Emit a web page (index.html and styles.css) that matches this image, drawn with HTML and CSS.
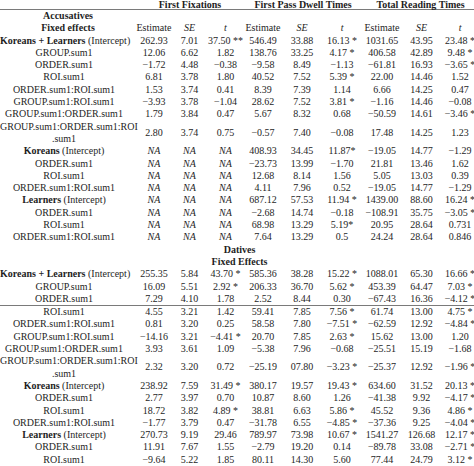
FILE: index.html
```html
<!DOCTYPE html>
<html>
<head>
<meta charset="utf-8">
<link rel="stylesheet" href="styles.css">
</head>
<body>
<table class="tbl">
<colgroup>
<col class="c-lab"><col class="c-e1"><col class="c-s1"><col class="c-t1"><col class="c-e2"><col class="c-s2"><col class="c-t2"><col class="c-e3"><col class="c-s3"><col class="c-t3">
</colgroup>
<tbody>
<tr class="head"><td></td><td colspan="3">First Fixations</td><td colspan="3">First Pass Dwell Times</td><td colspan="3">Total Reading Times</td></tr>
<tr><td class="sec">Accusatives</td><td></td><td></td><td></td><td></td><td></td><td></td><td></td><td></td><td></td></tr>
<tr><td class="sec">Fixed effects</td><td>Estimate</td><td class="i">SE</td><td class="i">t</td><td>Estimate</td><td class="i">SE</td><td class="i">t</td><td>Estimate</td><td class="i">SE</td><td class="i">t</td></tr>
<tr><td class="lab"><b>Koreans + Learners</b> (Intercept)</td><td>262.93</td><td>7.01</td><td>37.50 **</td><td>546.49</td><td>33.88</td><td>16.13 *</td><td>1031.65</td><td>43.95</td><td>23.48 *</td></tr>
<tr><td class="lab">GROUP.sum1</td><td>12.06</td><td>6.62</td><td>1.82</td><td>138.76</td><td>33.25</td><td>4.17 *</td><td>406.58</td><td>42.89</td><td>9.48 *</td></tr>
<tr><td class="lab">ORDER.sum1</td><td>−1.72</td><td>4.48</td><td>−0.38</td><td>−9.58</td><td>8.49</td><td>−1.13</td><td>−61.81</td><td>16.93</td><td>−3.65 *</td></tr>
<tr><td class="lab">ROI.sum1</td><td>6.81</td><td>3.78</td><td>1.80</td><td>40.52</td><td>7.52</td><td>5.39 *</td><td>22.00</td><td>14.46</td><td>1.52</td></tr>
<tr><td class="lab">ORDER.sum1:ROI.sum1</td><td>1.53</td><td>3.74</td><td>0.41</td><td>8.39</td><td>7.39</td><td>1.14</td><td>6.66</td><td>14.25</td><td>0.47</td></tr>
<tr><td class="lab">GROUP.sum1:ROI.sum1</td><td>−3.93</td><td>3.78</td><td>−1.04</td><td>28.62</td><td>7.52</td><td>3.81 *</td><td>−1.16</td><td>14.46</td><td>−0.08</td></tr>
<tr><td class="lab">GROUP.sum1:ORDER.sum1</td><td>1.79</td><td>3.84</td><td>0.47</td><td>5.67</td><td>8.32</td><td>0.68</td><td>−50.59</td><td>14.61</td><td>−3.46 *</td></tr>
<tr><td class="lab">GROUP.sum1:ORDER.sum1:ROI<br>.sum1</td><td>2.80</td><td>3.74</td><td>0.75</td><td>−0.57</td><td>7.40</td><td>−0.08</td><td>17.48</td><td>14.25</td><td>1.23</td></tr>
<tr><td class="lab"><b>Koreans</b> (Intercept)</td><td class="i">NA</td><td class="i">NA</td><td class="i">NA</td><td>408.93</td><td>34.45</td><td>11.87*</td><td>−19.05</td><td>14.77</td><td>−1.29</td></tr>
<tr><td class="lab">ORDER.sum1</td><td class="i">NA</td><td class="i">NA</td><td class="i">NA</td><td>−23.73</td><td>13.99</td><td>−1.70</td><td>21.81</td><td>13.46</td><td>1.62</td></tr>
<tr><td class="lab">ROI.sum1</td><td class="i">NA</td><td class="i">NA</td><td class="i">NA</td><td>12.68</td><td>8.14</td><td>1.56</td><td>5.05</td><td>13.03</td><td>0.39</td></tr>
<tr><td class="lab">ORDER.sum1:ROI.sum1</td><td class="i">NA</td><td class="i">NA</td><td class="i">NA</td><td>4.11</td><td>7.96</td><td>0.52</td><td>−19.05</td><td>14.77</td><td>−1.29</td></tr>
<tr><td class="lab"><b>Learners</b> (Intercept)</td><td class="i">NA</td><td class="i">NA</td><td class="i">NA</td><td>687.12</td><td>57.53</td><td>11.94 *</td><td>1439.00</td><td>88.60</td><td>16.24 *</td></tr>
<tr><td class="lab">ORDER.sum1</td><td class="i">NA</td><td class="i">NA</td><td class="i">NA</td><td>−2.68</td><td>14.74</td><td>−0.18</td><td>−108.91</td><td>35.75</td><td>−3.05 *</td></tr>
<tr><td class="lab">ROI.sum1</td><td class="i">NA</td><td class="i">NA</td><td class="i">NA</td><td>68.98</td><td>13.29</td><td>5.19*</td><td>20.95</td><td>28.64</td><td>0.731</td></tr>
<tr><td class="lab">ORDER.sum1:ROI.sum1</td><td class="i">NA</td><td class="i">NA</td><td class="i">NA</td><td>7.64</td><td>13.29</td><td>0.5</td><td>24.24</td><td>28.64</td><td>0.846</td></tr>
<tr><td colspan="10" class="mid">Datives</td></tr>
<tr><td colspan="10" class="mid">Fixed Effects</td></tr>
<tr><td class="lab"><b>Koreans + Learners</b> (Intercept)</td><td>255.35</td><td>5.84</td><td>43.70 *</td><td>585.36</td><td>38.28</td><td>15.22 *</td><td>1088.01</td><td>65.30</td><td>16.66 *</td></tr>
<tr><td class="lab">GROUP.sum1</td><td>16.09</td><td>5.51</td><td>2.92 *</td><td>206.33</td><td>36.70</td><td>5.62 *</td><td>453.39</td><td>64.47</td><td>7.03 *</td></tr>
<tr><td class="lab">ORDER.sum1</td><td>7.29</td><td>4.10</td><td>1.78</td><td>2.52</td><td>8.44</td><td>0.30</td><td>−67.43</td><td>16.36</td><td>−4.12 *</td></tr>
<tr class="rule"><td class="lab">ROI.sum1</td><td>4.55</td><td>3.21</td><td>1.42</td><td>59.41</td><td>7.85</td><td>7.56 *</td><td>61.74</td><td>13.00</td><td>4.75 *</td></tr>
<tr><td class="lab">ORDER.sum1:ROI.sum1</td><td>0.81</td><td>3.20</td><td>0.25</td><td>58.58</td><td>7.80</td><td>−7.51 *</td><td>−62.59</td><td>12.92</td><td>−4.84 *</td></tr>
<tr><td class="lab">GROUP.sum1:ROI.sum1</td><td>−14.16</td><td>3.21</td><td>−4.41 *</td><td>20.70</td><td>7.85</td><td>2.63 *</td><td>15.62</td><td>13.00</td><td>1.20</td></tr>
<tr><td class="lab">GROUP.sum1:ORDER.sum1</td><td>3.93</td><td>3.61</td><td>1.09</td><td>−5.38</td><td>7.96</td><td>−0.68</td><td>−25.51</td><td>15.19</td><td>−1.68</td></tr>
<tr><td class="lab">GROUP.sum1:ORDER.sum1:ROI<br>.sum1</td><td>2.32</td><td>3.20</td><td>0.72</td><td>−25.19</td><td>07.80</td><td>−3.23 *</td><td>−25.37</td><td>12.92</td><td>−1.96 *</td></tr>
<tr><td class="lab"><b>Koreans</b> (Intercept)</td><td>238.92</td><td>7.59</td><td>31.49 *</td><td>380.17</td><td>19.57</td><td>19.43 *</td><td>634.60</td><td>31.52</td><td>20.13 *</td></tr>
<tr><td class="lab">ORDER.sum1</td><td>2.77</td><td>3.97</td><td>0.70</td><td>10.87</td><td>8.60</td><td>1.26</td><td>−41.38</td><td>9.92</td><td>−4.17 *</td></tr>
<tr><td class="lab">ROI.sum1</td><td>18.72</td><td>3.82</td><td>4.89 *</td><td>38.81</td><td>6.63</td><td>5.86 *</td><td>45.52</td><td>9.36</td><td>4.86 *</td></tr>
<tr><td class="lab">ORDER.sum1:ROI.sum1</td><td>−1.77</td><td>3.79</td><td>0.47</td><td>−31.78</td><td>6.55</td><td>−4.85 *</td><td>−37.36</td><td>9.25</td><td>−4.04 *</td></tr>
<tr><td class="lab"><b>Learners</b> (Intercept)</td><td>270.73</td><td>9.19</td><td>29.46</td><td>789.97</td><td>73.98</td><td>10.67 *</td><td>1541.27</td><td>126.68</td><td>12.17 *</td></tr>
<tr><td class="lab">ORDER.sum1</td><td>11.91</td><td>7.67</td><td>1.55</td><td>−2.79</td><td>19.20</td><td>0.14</td><td>−89.78</td><td>33.08</td><td>−2.71 *</td></tr>
<tr><td class="lab">ROI.sum1</td><td>−9.64</td><td>5.22</td><td>1.85</td><td>80.11</td><td>14.30</td><td>5.60</td><td>77.44</td><td>24.79</td><td>3.12 *</td></tr>
</tbody>
</table>
</body>
</html>
```

FILE: styles.css
```css
html, body {
  margin: 0;
  padding: 0;
  background: #ffffff;
  overflow: hidden;
}

body {
  font-family: "Liberation Serif", "Times New Roman", serif;
  font-size: 10px;
  color: #1e1e1e;
}

.tbl {
  border-collapse: collapse;
  table-layout: fixed;
  width: 479px;
}

.c-lab { width: 136px; }
.c-e1 { width: 36px; }
.c-s1 { width: 35px; }
.c-t1 { width: 37px; }
.c-e2 { width: 38px; }
.c-s2 { width: 40px; }
.c-t2 { width: 40px; }
.c-e3 { width: 40px; }
.c-s3 { width: 39px; }
.c-t3 { width: 38px; }

.tbl td {
  padding: 0;
  line-height: 12.3px;
  height: 12.3px;
  text-align: center;
  vertical-align: middle;
  white-space: nowrap;
}

.tbl .head td {
  line-height: 9px;
  height: 9px;
  font-weight: bold;
  border-bottom: 1px solid #7a7a7a;
}

.tbl td.lab {
  padding-right: 8px;
}

.tbl td.sec,
.tbl td.mid {
  font-weight: bold;
}

.tbl .rule td {
  border-top: 1px solid #7a7a7a;
}

.i {
  font-style: italic;
}
```
